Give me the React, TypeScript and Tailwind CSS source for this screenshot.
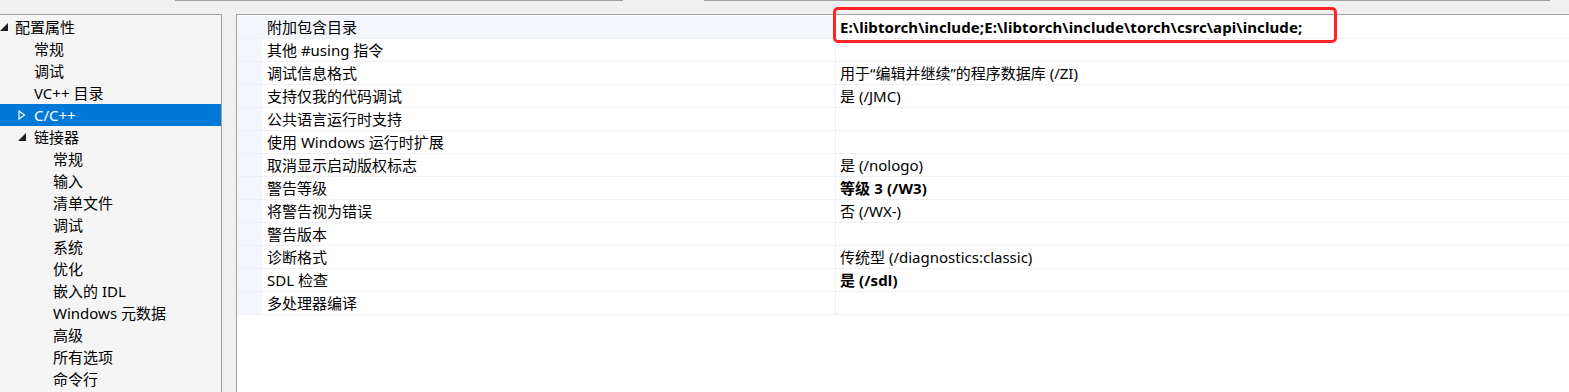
import React from "react";

const FONT = { fontFamily: '"Noto Sans", "Noto Sans CJK SC", sans-serif' };

type TreeItem = { label: string; level: number; icon?: "open" | "closed"; selected?: boolean };

const tree: TreeItem[] = [
  { label: "配置属性", level: 0, icon: "open" },
  { label: "常规", level: 1 },
  { label: "调试", level: 1 },
  { label: "VC++ 目录", level: 1 },
  { label: "C/C++", level: 1, icon: "closed", selected: true },
  { label: "链接器", level: 1, icon: "open" },
  { label: "常规", level: 2 },
  { label: "输入", level: 2 },
  { label: "清单文件", level: 2 },
  { label: "调试", level: 2 },
  { label: "系统", level: 2 },
  { label: "优化", level: 2 },
  { label: "嵌入的 IDL", level: 2 },
  { label: "Windows 元数据", level: 2 },
  { label: "高级", level: 2 },
  { label: "所有选项", level: 2 },
  { label: "命令行", level: 2 },
];

type Prop = { name: string; value?: string; bold?: boolean; highlight?: boolean };

const props: Prop[] = [
  { name: "附加包含目录", value: "E:\\libtorch\\include;E:\\libtorch\\include\\torch\\csrc\\api\\include;", bold: true, highlight: true },
  { name: "其他 #using 指令" },
  { name: "调试信息格式", value: "用于“编辑并继续”的程序数据库 (/ZI)" },
  { name: "支持仅我的代码调试", value: "是 (/JMC)" },
  { name: "公共语言运行时支持" },
  { name: "使用 Windows 运行时扩展" },
  { name: "取消显示启动版权标志", value: "是 (/nologo)" },
  { name: "警告等级", value: "等级 3 (/W3)", bold: true },
  { name: "将警告视为错误", value: "否 (/WX-)" },
  { name: "警告版本" },
  { name: "诊断格式", value: "传统型 (/diagnostics:classic)" },
  { name: "SDL 检查", value: "是 (/sdl)", bold: true },
  { name: "多处理器编译" },
];

function OpenTri() {
  return (
    <svg width="8" height="8" viewBox="0 0 8 8" className="shrink-0">
      <polygon points="8,0 8,8 0,8" fill="#1e1e1e" />
    </svg>
  );
}

function ClosedTri() {
  return (
    <svg width="8" height="10" viewBox="0 0 8 10" className="shrink-0">
      <polygon points="1,1 6.5,5 1,9" fill="none" stroke="#ffffff" strokeWidth="1.2" />
    </svg>
  );
}

export default function App() {
  return (
    <div
      className="w-[1569px] h-[392px] bg-[#f0f0f0] overflow-hidden relative text-[15px] text-black"
      style={FONT}
    >
      {/* top strip with bottom edges of controls above */}
      <div className="h-[14px] flex">
        <div className="ml-[175px] w-[448px] h-[1px] bg-[#a0a0a0]" />
        <div className="ml-[81px] w-[846px] h-[1px] bg-[#a0a0a0]" />
      </div>

      <div className="flex h-[378px]">
        {/* left tree */}
        <div className="w-[222px] shrink-0 bg-[#f5f5f5] border-t border-r border-[#a0a0a0] pt-[1px]">
          {tree.map((t, i) => (
            <div
              key={i}
              className={
                "h-[22px] flex items-center " +
                (t.selected ? "bg-[#0078d7] text-white" : "")
              }
            >
              <div
                className={
                  "flex items-center " +
                  (t.level === 0 ? "w-[15px]" : t.level === 1 ? "w-[34px] pl-[18px]" : "w-[53px]")
                }
              >
                {t.icon === "open" && <OpenTri />}
                {t.icon === "closed" && <ClosedTri />}
              </div>
              <span className="whitespace-nowrap leading-none">{t.label}</span>
            </div>
          ))}
        </div>

        {/* right property grid */}
        <div className="ml-[14px] flex-1 bg-white border-t border-l border-[#a0a0a0] pt-[1px]">
          {props.map((p, i) => (
            <div key={i} className="flex h-[23px] border-b border-[#eef0f5]">
              <div className="w-[25px] shrink-0 bg-[#f3f6fb]" />
              <div
                className={
                  "w-[573px] shrink-0 pl-[5px] flex items-center whitespace-nowrap " +
                  (p.highlight ? "bg-[#f3f6fb]" : "bg-white")
                }
              >
                {p.name}
              </div>
              <div
                className={
                  "flex-1 border-l border-[#eef0f5] pl-[4px] flex items-center whitespace-nowrap " +
                  (p.bold ? "font-bold tracking-[0.1px]" : "")
                }
              >
                {p.value}
              </div>
            </div>
          ))}
        </div>
      </div>

      {/* red annotation box */}
      <div className="absolute left-[833px] top-[7px] w-[504px] h-[36px] border-[3px] border-[#ff2525] rounded-[5px]" />
    </div>
  );
}
